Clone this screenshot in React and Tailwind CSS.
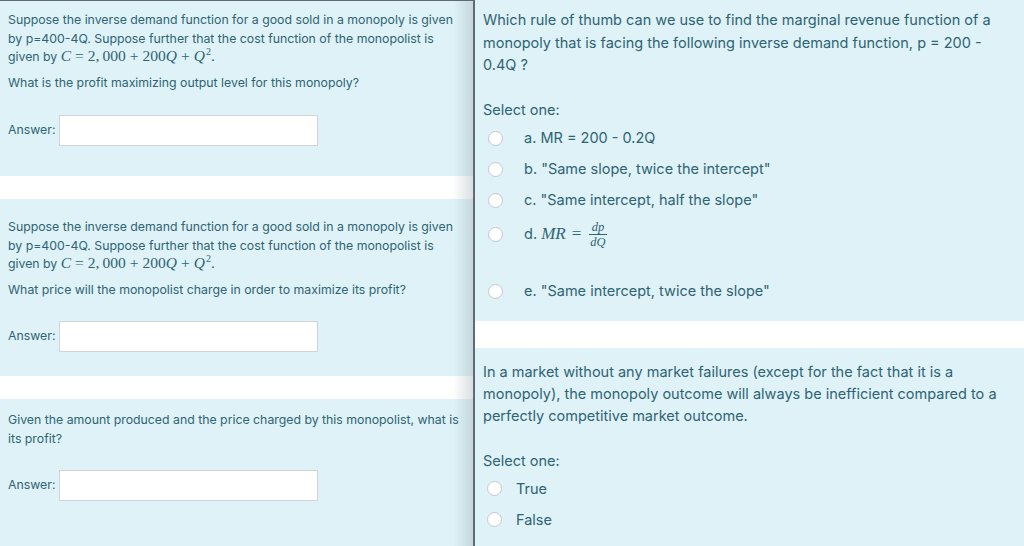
import React from 'react';

const Radio = () => (
  <span className="inline-block w-[15px] h-[15px] rounded-full bg-white border border-[#c3c9cc] shrink-0" />
);

const Op = ({ children }) => <span className="px-[4px] not-italic">{children}</span>;

const CostFormula = () => (
  <span className="font-['Liberation_Serif',serif] text-[15.5px] leading-[15px] text-[#2f6473]">
    <i>C</i>
    <Op>=</Op>2,&thinsp;000<Op>+</Op>200<i>Q</i>
    <Op>+</Op>
    <i>Q</i>
    <sup className="text-[10px] relative -top-[6px] ml-[1px]">2</sup>.
  </span>
);

const AnswerRow = () => (
  <div className="flex items-center">
    <span className="w-[51px]">Answer:</span>
    <div className="w-[259px] h-[31px] bg-white border border-[#ced4da]" />
  </div>
);

const Option = ({ children, height = 'h-[31px]' }) => (
  <div className={`flex items-center ${height}`}>
    <span className="w-[41px] pl-[5px] flex items-center">
      <Radio />
    </span>
    <span>{children}</span>
  </div>
);

export default function App() {
  return (
    <div className="flex w-[1024px] h-[546px] overflow-hidden bg-white text-[#2f6473] font-['Inter','Liberation_Sans',sans-serif]">
      {/* left column */}
      <div className="relative w-[475px] shrink-0 flex flex-col border-t border-[#5f6b70] border-r-2 text-[12.3px] leading-[18.5px]">
        <div className="h-[175px] bg-[#def2f8] px-2 pt-[10px]">
          <p>
            Suppose the inverse demand function for a good sold in a monopoly is given by p=400-4Q. Suppose further that
            the cost function of the monopolist is given by <CostFormula />
          </p>
          <p className="mt-[7px]">What is the profit maximizing output level for this monopoly?</p>
          <div className="mt-[23px]">
            <AnswerRow />
          </div>
        </div>
        <div className="h-[23px] bg-white" />
        <div className="h-[177px] bg-[#def2f8] px-2 pt-[19px]">
          <p>
            Suppose the inverse demand function for a good sold in a monopoly is given by p=400-4Q. Suppose further that
            the cost function of the monopolist is given by <CostFormula />
          </p>
          <p className="mt-[7px]">What price will the monopolist charge in order to maximize its profit?</p>
          <div className="mt-[22px]">
            <AnswerRow />
          </div>
        </div>
        <div className="h-[23px] bg-white" />
        <div className="flex-1 bg-[#def2f8] px-2 pt-[12px]">
          <p>Given the amount produced and the price charged by this monopolist, what is its profit?</p>
          <div className="mt-[22px]">
            <AnswerRow />
          </div>
        </div>
        <div className="pointer-events-none absolute right-0 top-0 bottom-0 w-[20px] bg-gradient-to-r from-transparent to-[#9fb0b6]/40" />
      </div>

      {/* right column */}
      <div className="flex-1 flex flex-col text-[14.5px] leading-[22.5px]">
        <div className="h-[321px] bg-[#def2f8] pl-[8px] pr-4 pt-[9px]">
          <p>
            Which rule of thumb can we use to find the marginal revenue function of a monopoly that is facing the following
            inverse demand function, p = 200 - 0.4Q ?
          </p>
          <p className="mt-[22px]">Select one:</p>
          <div className="mt-[2px]">
            <Option>a. MR = 200 - 0.2Q</Option>
            <Option>b. "Same slope, twice the intercept"</Option>
            <Option>c. "Same intercept, half the slope"</Option>
            <Option height="h-[37px]">
              <span className="inline-flex items-center">
                d.&nbsp;
                <span className="font-['Liberation_Serif',serif] text-[17px]">
                  <i>MR</i>
                  <span className="px-[6px]">=</span>
                </span>
                <span className="inline-flex flex-col items-center font-['Liberation_Serif',serif] italic text-[12.5px] leading-[14px] ml-[2px]">
                  <span>dp</span>
                  <span className="border-t border-[#2f6473] px-[1px]">dQ</span>
                </span>
              </span>
            </Option>
            <div className="h-[23px]" />
            <Option>e. "Same intercept, twice the slope"</Option>
          </div>
        </div>
        <div className="h-[27px] bg-white" />
        <div className="flex-1 bg-[#def2f8] pl-[8px] pr-4 pt-[13px] leading-[22px]">
          <p>
            In a market without any market failures (except for the fact that it is a monopoly), the monopoly outcome will
            always be inefficient compared to a perfectly competitive market outcome.
          </p>
          <p className="mt-[23px]">Select one:</p>
          <div className="mt-[1px]">
            <div className="flex items-center h-[31px]">
              <span className="w-[33px] pl-[4px] flex items-center">
                <Radio />
              </span>
              <span>True</span>
            </div>
            <div className="flex items-center h-[31px]">
              <span className="w-[33px] pl-[4px] flex items-center">
                <Radio />
              </span>
              <span>False</span>
            </div>
          </div>
        </div>
      </div>
    </div>
  );
}
